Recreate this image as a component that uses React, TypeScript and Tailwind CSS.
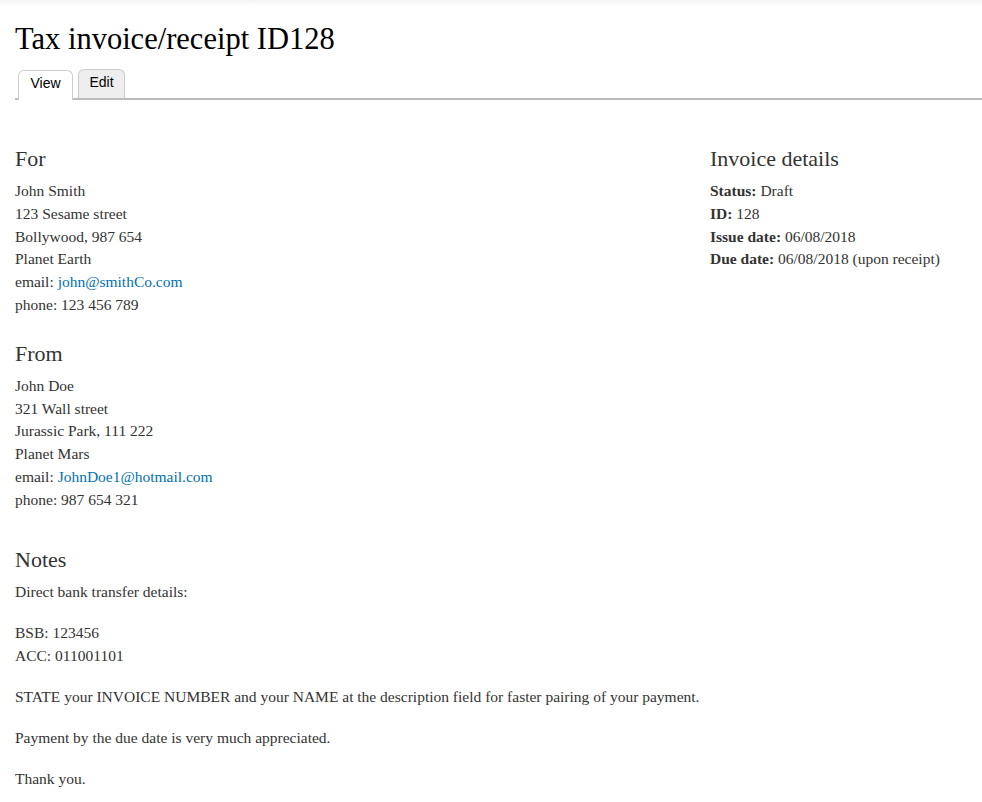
import React from "react";

const serif = { fontFamily: '"Liberation Serif", "Times New Roman", serif' };

const Line = ({ children }: { children: React.ReactNode }) => (
  <div className="leading-[22.8px]">{children}</div>
);

export default function App() {
  return (
    <div className="min-h-screen bg-white text-[#333] font-['Liberation_Serif',serif]">
      <div className="h-[6px] bg-gradient-to-b from-[#f4f4f4] to-white" />

      {/* Title */}
      <div className="pl-[15px]">
        <h1 className="text-[30.5px] leading-[36px] pt-[15px] text-black">
          Tax invoice/receipt ID128
        </h1>

        {/* Tabs */}
        <div className="flex items-end gap-[5px] pl-[3px] mt-[12px] border-b-2 border-[#bbb] font-['Liberation_Sans',Arial,sans-serif] text-[14px] text-black">
          <div className="h-[30px] w-[55px] justify-center flex items-center bg-white border border-b-0 border-[#ccc] rounded-t-[6px] -mb-[2px] pb-[4px]">
            View
          </div>
          <div className="h-[29px] w-[47px] justify-center flex items-center bg-[#eee] border border-b-0 border-[#ccc] rounded-t-[6px] pb-[3px]">
            Edit
          </div>
        </div>
      </div>

      {/* Body */}
      <div className="flex px-[15px] pt-[46px] text-[15.5px]" style={serif}>
        <div className="w-[695px]">
          <h2 className="text-[22px] leading-[26px] mb-[8px]">For</h2>
          <Line>John Smith</Line>
          <Line>123 Sesame street</Line>
          <Line>Bollywood, 987 654</Line>
          <Line>Planet Earth</Line>
          <Line>
            email: <a className="text-[#0071b3]">john@smithCo.com</a>
          </Line>
          <Line>phone: 123 456 789</Line>

          <h2 className="text-[22px] leading-[26px] mt-[24px] mb-[8px]">From</h2>
          <Line>John Doe</Line>
          <Line>321 Wall street</Line>
          <Line>Jurassic Park, 111 222</Line>
          <Line>Planet Mars</Line>
          <Line>
            email: <a className="text-[#0071b3]">JohnDoe1@hotmail.com</a>
          </Line>
          <Line>phone: 987 654 321</Line>

          <h2 className="text-[22px] leading-[26px] mt-[35px] mb-[7px]">Notes</h2>
          <p className="leading-[23px] mb-[18px]">Direct bank transfer details:</p>
          <p className="leading-[23px] mb-[18px]">
            BSB: 123456
            <br />
            ACC: 011001101
          </p>
          <p className="leading-[23px] mb-[18px] whitespace-nowrap">
            STATE your INVOICE NUMBER and your NAME at the description field for faster pairing of your payment.
          </p>
          <p className="leading-[23px] mb-[18px]">Payment by the due date is very much appreciated.</p>
          <p className="leading-[23px] mb-[18px]">Thank you.</p>
        </div>

        <div>
          <h2 className="text-[22px] leading-[26px] mb-[8px]">Invoice details</h2>
          <Line>
            <b>Status:</b> Draft
          </Line>
          <Line>
            <b>ID:</b> 128
          </Line>
          <Line>
            <b>Issue date:</b> 06/08/2018
          </Line>
          <Line>
            <b>Due date:</b> 06/08/2018 (upon receipt)
          </Line>
        </div>
      </div>
    </div>
  );
}
